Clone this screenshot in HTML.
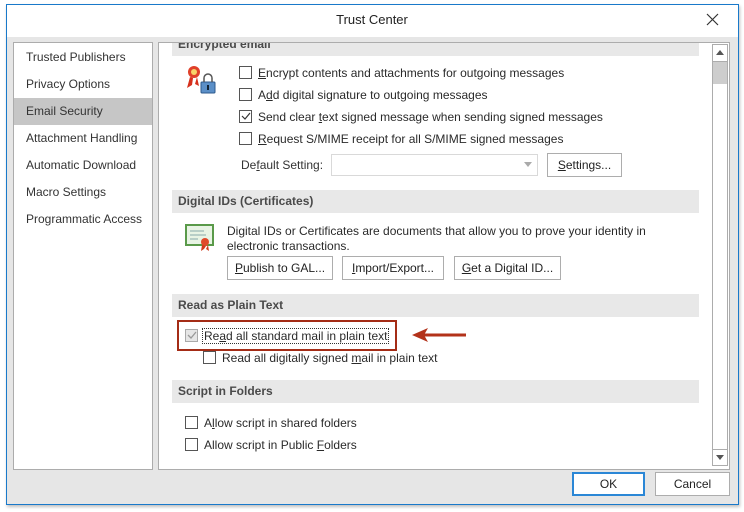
<!DOCTYPE html>
<html><head><style>
*{box-sizing:border-box;margin:0;padding:0}
body{width:744px;height:512px;background:#fff;font-family:"Liberation Sans",sans-serif;font-size:12px;color:#2a2a2a;position:relative;overflow:hidden}
.a{position:absolute}
.win{left:6px;top:4px;width:733px;height:501px;border:1px solid #1979ca;background:#e6e6e6;box-shadow:1px 2px 3px rgba(0,0,0,.25)}
.title{left:7px;top:5px;width:731px;height:32px;background:#fff}
.panel{background:#fff;border:1px solid #acacac}
.nav div{height:27px;line-height:27px;padding-left:12px;color:#333}
.sel{background:#c6c6c6}
.hdr{background:#e8e8e8;left:172px;width:527px;height:23px;line-height:23px;padding-left:6px;font-weight:bold;color:#4a4a4a}
.cb{width:13px;height:13px;border:1px solid #555;background:#fff}
.btn{border:1px solid #adadad;background:#fff;text-align:center;line-height:22px;color:#222;height:24px}
u{text-decoration:underline}
</style></head><body>
<div class="a win"></div>
<div class="a title"></div>
<div class="a" style="left:0;top:12px;width:744px;text-align:center;font-size:13px;color:#222">Trust Center</div>
<svg class="a" style="left:706px;top:13px" width="13" height="13"><path d="M1 1L12 12M12 1L1 12" stroke="#333" stroke-width="1.2"/></svg>

<div class="a panel nav" style="left:13px;top:42px;width:140px;height:428px;padding-top:1px">
<div>Trusted Publishers</div><div>Privacy Options</div><div class="sel">Email Security</div><div>Attachment Handling</div><div>Automatic Download</div><div>Macro Settings</div><div>Programmatic Access</div>
</div>
<div class="a panel" style="left:158px;top:42px;width:572px;height:428px"></div>

<div class="a" style="left:712px;top:44px;width:16px;height:422px;border:1px solid #acacac;background:#fff"></div>
<div class="a" style="left:713px;top:62px;width:14px;height:22px;background:#cdcdcd"></div>
<div class="a" style="left:713px;top:45px;width:14px;height:17px;border-bottom:1px solid #acacac"></div>
<svg class="a" style="left:716px;top:50px" width="8" height="5"><path d="M0 5L4 0L8 5Z" fill="#555"/></svg>
<div class="a" style="left:713px;top:449px;width:14px;height:16px;border-top:1px solid #acacac"></div>
<svg class="a" style="left:716px;top:455px" width="8" height="5"><path d="M0 0L4 5L8 0Z" fill="#555"/></svg>

<div class="a hdr" style="top:43px;height:13px;overflow:hidden;line-height:3px">Encrypted email</div>
<svg class="a" style="left:185px;top:64px" width="32" height="30"><circle cx="9" cy="8" r="6" fill="#e0402a"/><circle cx="9" cy="8" r="3" fill="#f7d46a"/><path d="M5 13L2 24L7 21L8 14ZM12 13L14 22L10 20Z" fill="#d6301c"/><rect x="16" y="18" width="14" height="11" rx="1" fill="#5b8fc7" stroke="#2c5a8c"/><path d="M19 18V14a4 4 0 0 1 8 0v4" fill="none" stroke="#555" stroke-width="1.5"/><rect x="22" y="21" width="2" height="5" fill="#123"/></svg>
<div class="a cb" style="left:239px;top:66px"></div><div class="a" style="left:258px;top:66px"><u>E</u>ncrypt contents and attachments for outgoing messages</div>
<div class="a cb" style="left:239px;top:88px"></div><div class="a" style="left:258px;top:88px">A<u>d</u>d digital signature to outgoing messages</div>
<div class="a cb" style="left:239px;top:110px"></div><svg class="a" style="left:241px;top:112px" width="10" height="9"><path d="M1 4L4 7L9 1" fill="none" stroke="#333" stroke-width="1.2"/></svg><div class="a" style="left:258px;top:110px">Send clear <u>t</u>ext signed message when sending signed messages</div>
<div class="a cb" style="left:239px;top:132px"></div><div class="a" style="left:258px;top:132px"><u>R</u>equest S/MIME receipt for all S/MIME signed messages</div>
<div class="a" style="left:241px;top:158px;color:#333">De<u>f</u>ault Setting:</div>
<div class="a" style="left:331px;top:154px;width:207px;height:22px;border:1px solid #d9d9d9;background:#fff"></div>
<svg class="a" style="left:524px;top:162px" width="8" height="5"><path d="M0 0L4 5L8 0Z" fill="#aaa"/></svg>
<div class="a btn" style="left:547px;top:153px;width:75px"><u>S</u>ettings...</div>

<div class="a hdr" style="top:190px">Digital IDs (Certificates)</div>
<svg class="a" style="left:185px;top:223px" width="30" height="30"><rect x="1" y="2" width="27" height="20" fill="#e8f4e4" stroke="#5a9a4a" stroke-width="2"/><path d="M5 8h14M5 12h16M5 16h8" stroke="#8aa" stroke-width="1"/><circle cx="20" cy="19" r="4" fill="#e04a2a"/><path d="M17 22L16 28L19 26L21 23M23 22L24 28L21 26" fill="#d23a1c"/></svg>
<div class="a" style="left:227px;top:224px;line-height:15px">Digital IDs or Certificates are documents that allow you to prove your identity in<br>electronic transactions.</div>
<div class="a btn" style="left:227px;top:256px;width:106px"><u>P</u>ublish to GAL...</div>
<div class="a btn" style="left:342px;top:256px;width:102px"><u>I</u>mport/Export...</div>
<div class="a btn" style="left:454px;top:256px;width:107px"><u>G</u>et a Digital ID...</div>

<div class="a hdr" style="top:294px">Read as Plain Text</div>
<div class="a cb" style="left:185px;top:329px;background:#e6e6e6;border-color:#aaa"></div><svg class="a" style="left:187px;top:331px" width="10" height="9"><path d="M1 4L4 7L9 1" fill="none" stroke="#999" stroke-width="1.3"/></svg>
<div class="a" style="left:202px;top:328px;border:1px dotted #333;padding:0 1px;line-height:14px">Re<u>a</u>d all standard mail in plain text</div>
<div class="a" style="left:177px;top:320px;width:220px;height:31px;border:2px solid #a42c16"></div>
<svg class="a" style="left:410px;top:325px" width="58" height="20"><path d="M56 10H12" stroke="#b3321a" stroke-width="3"/><path d="M2 10L18 3L14 10L18 17Z" fill="#b3321a"/></svg>
<div class="a cb" style="left:203px;top:351px"></div><div class="a" style="left:222px;top:351px">Read all digitally signed <u>m</u>ail in plain text</div>

<div class="a hdr" style="top:380px">Script in Folders</div>
<div class="a cb" style="left:185px;top:416px"></div><div class="a" style="left:204px;top:416px">A<u>l</u>low script in shared folders</div>
<div class="a cb" style="left:185px;top:438px"></div><div class="a" style="left:204px;top:438px">Allow script in Public <u>F</u>olders</div>

<div class="a btn" style="left:572px;top:472px;width:73px;border:2px solid #2b87d6;line-height:20px">OK</div>
<div class="a btn" style="left:655px;top:472px;width:75px">Cancel</div>
</body></html>
